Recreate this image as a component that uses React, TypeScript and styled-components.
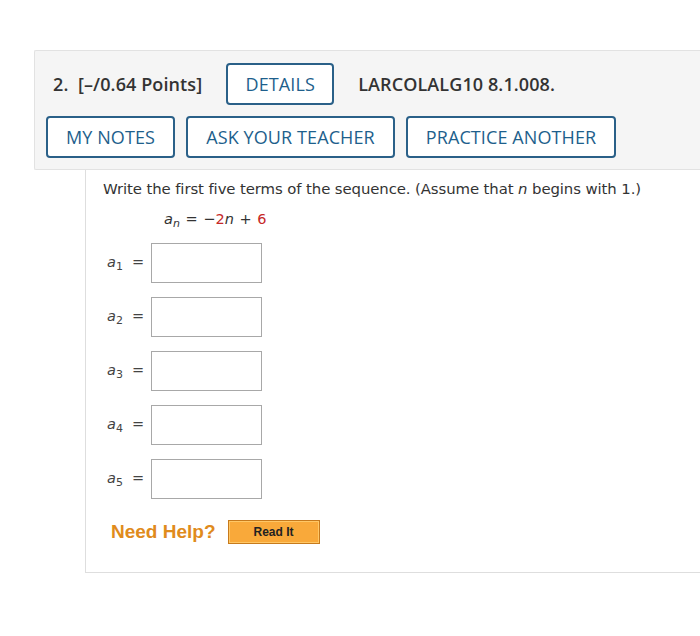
import styled, { createGlobalStyle } from 'styled-components';

const Global = createGlobalStyle`
  html, body {
    margin: 0;
    padding: 0;
    background: #fff;
    overflow: hidden;
  }
`;

const Page = styled.div`
  padding: 50px 0 0 34px;
  width: 700px;
  box-sizing: border-box;
`;

const Header = styled.div`
  background: #f5f5f5;
  border: 1px solid #e2e2e2;
  border-right: none;
  border-radius: 2px 0 0 2px;
  padding: 12px 0 11px 11px;
  display: flex;
  flex-direction: column;
  gap: 11px;
  font-family: "Open Sans", "Noto Sans", sans-serif;
`;

const Row = styled.div`
  display: flex;
  align-items: center;
`;

const Title = styled.span`
  font-weight: 600;
  font-size: 18px;
  color: #333;
  letter-spacing: 0.1px;
  margin: 0 24px 0 7px;
`;

const Code = styled.span`
  font-weight: 600;
  font-size: 18px;
  color: #333;
  letter-spacing: 0.1px;
  margin-left: 13px;
`;

const Btn = styled.button<{ w: number }>`
  box-sizing: border-box;
  width: ${p => p.w}px;
  height: 42px;
  background: #fff;
  border: 2px solid #2a6088;
  border-radius: 4px;
  color: #1e5f8c;
  font-family: "Open Sans", "Noto Sans", sans-serif;
  font-size: 18px;
  letter-spacing: 0.1px;
  padding: 0;
  margin-right: 11px;
`;

const Content = styled.div`
  margin-left: 51px;
  border-left: 1px solid #dedede;
  border-bottom: 1px solid #dedede;
  padding: 8px 0 0 17px;
  font-family: "DejaVu Sans", Verdana, sans-serif;
  color: #333;
  height: 394px;
`;

const Prompt = styled.p`
  margin: 0;
  font-size: 14.9px;
  line-height: 22px;
  letter-spacing: -0.1px;
`;

const Formula = styled.div`
  margin: 8px 0 0 61px;
  font-size: 14.5px;
  line-height: 22px;
  word-spacing: 1px;
`;

const Red = styled.span`
  color: #c62828;
`;

const Terms = styled.div`
  margin-top: 8px;
  display: flex;
  flex-direction: column;
  gap: 14px;
`;

const TermRow = styled.div`
  display: flex;
  align-items: center;
`;

const Label = styled.span`
  width: 48px;
  padding-left: 4px;
  box-sizing: border-box;
  font-size: 14.5px;
  color: #444;
`;

const Sub = styled.sub`
  font-size: 11px;
  font-style: normal;
  vertical-align: -3px;
`;

const Box = styled.div`
  box-sizing: border-box;
  width: 111px;
  height: 40px;
  border: 1px solid #a8a8a8;
  background: #fff;
`;

const Help = styled.div`
  margin: 21px 0 0 8px;
  display: flex;
  align-items: center;
  gap: 12px;
  font-family: "Liberation Sans", Arial, sans-serif;
`;

const HelpText = styled.span`
  color: #e08b1c;
  font-weight: 700;
  font-size: 19px;
`;

const ReadIt = styled.button`
  box-sizing: border-box;
  width: 92px;
  height: 24px;
  background: #f9a93a;
  border: 1px solid #c77a1c;
  box-shadow: inset 0 0 0 1px #ffc766;
  font-family: "Liberation Sans", Arial, sans-serif;
  font-weight: 700;
  font-size: 12px;
  color: #222;
  padding: 0;
`;

const terms = [1, 2, 3, 4, 5];

export default function App() {
  return (
    <Page>
      <Global />
      <Header>
        <Row>
          <Title>2.&nbsp; [–/0.64 Points]</Title>
          <Btn w={108}>DETAILS</Btn>
          <Code>LARCOLALG10 8.1.008.</Code>
        </Row>
        <Row>
          <Btn w={129}>MY NOTES</Btn>
          <Btn w={209}>ASK YOUR TEACHER</Btn>
          <Btn w={210}>PRACTICE ANOTHER</Btn>
        </Row>
      </Header>
      <Content>
        <Prompt>
          Write the first five terms of the sequence. (Assume that <i>n</i> begins with 1.)
        </Prompt>
        <Formula>
          <i>a</i><Sub><i>n</i></Sub> = −<Red>2</Red><i>n</i> + <Red>6</Red>
        </Formula>
        <Terms>
          {terms.map(t => (
            <TermRow key={t}>
              <Label>
                <i>a</i><Sub>{t}</Sub>&nbsp; =
              </Label>
              <Box />
            </TermRow>
          ))}
        </Terms>
        <Help>
          <HelpText>Need Help?</HelpText>
          <ReadIt>Read It</ReadIt>
        </Help>
      </Content>
    </Page>
  );
}
